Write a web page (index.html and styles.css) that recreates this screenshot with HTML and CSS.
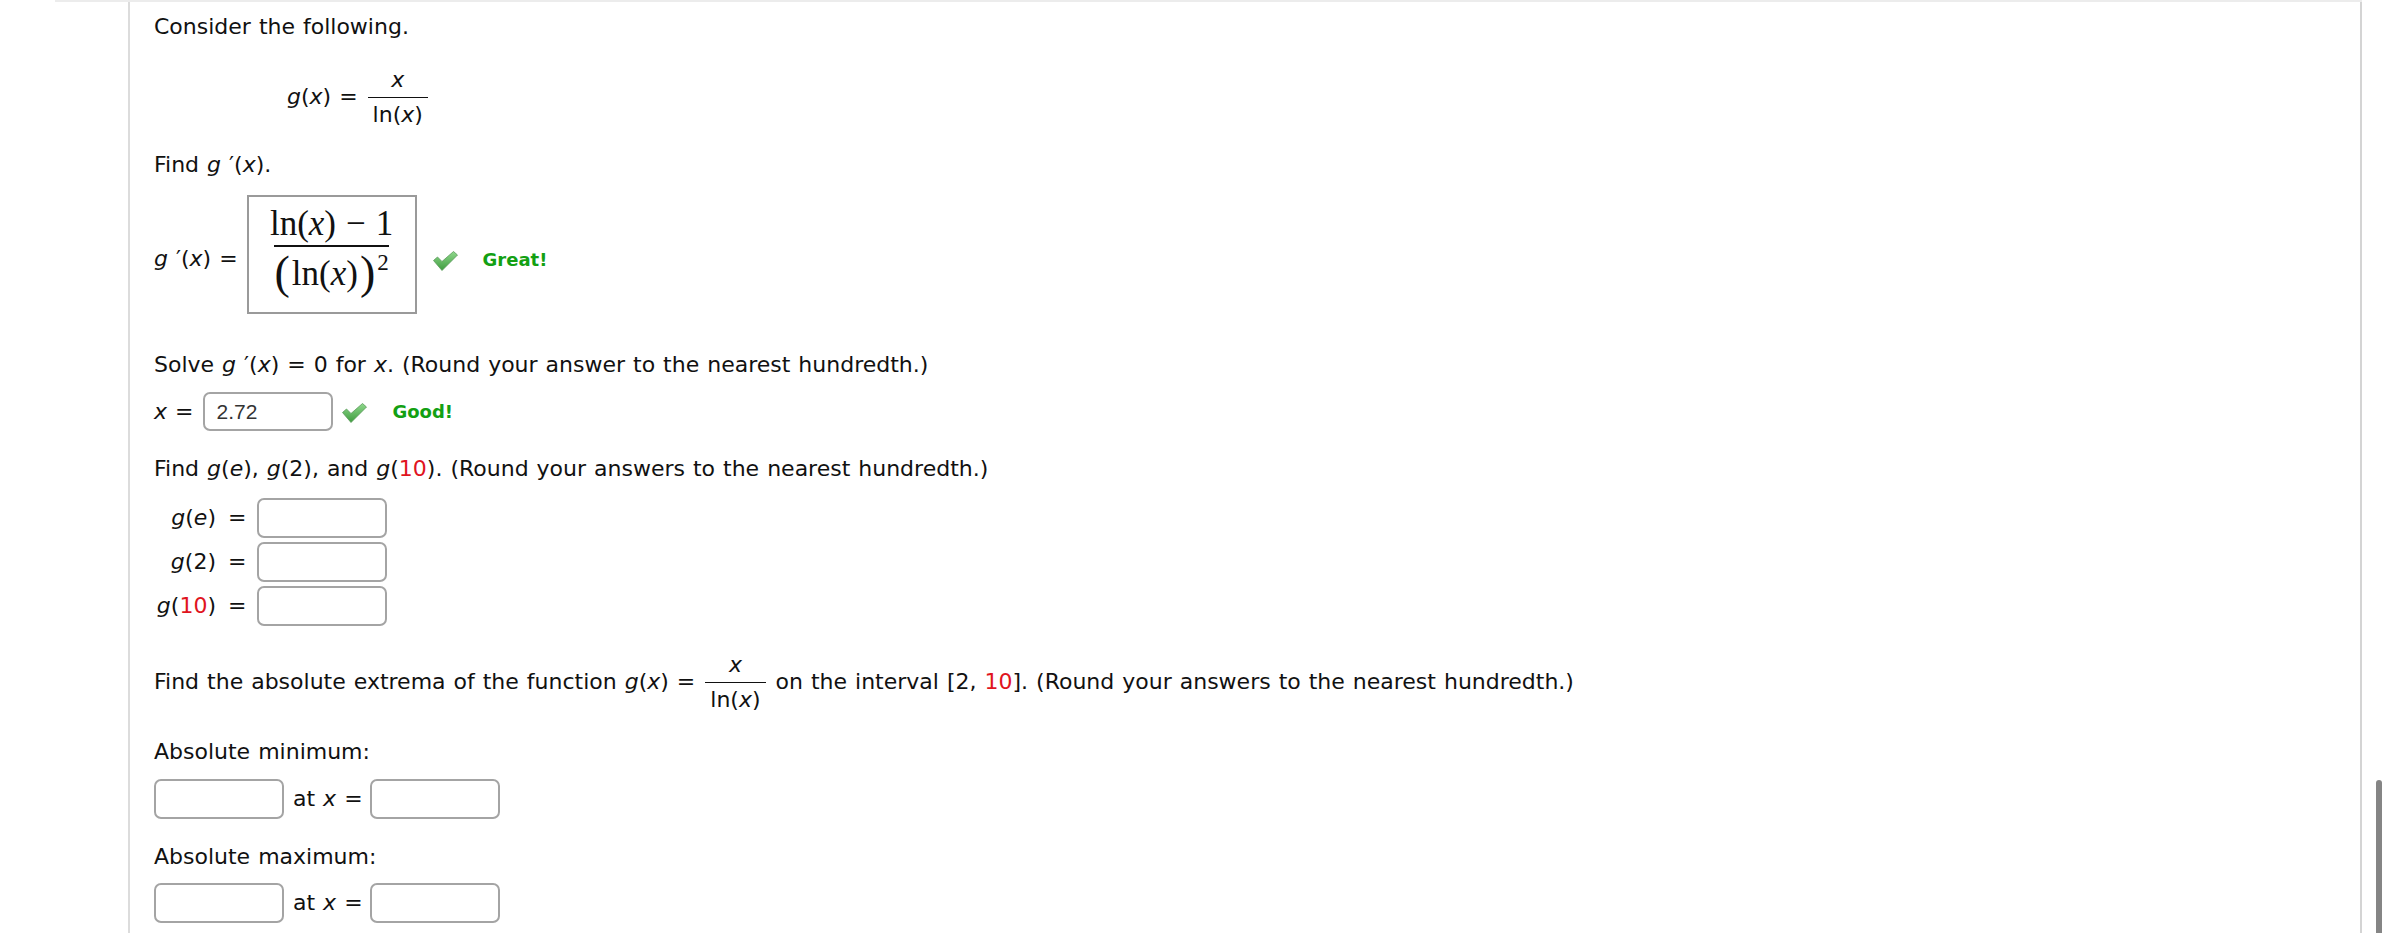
FILE: index.html
```html
<!DOCTYPE html>
<html lang="en">
<head>
<meta charset="utf-8">
<title>Consider the following</title>
<link rel="stylesheet" href="styles.css">
</head>
<body>
<div class="frame">
  <div class="panel">
    <p class="txt first">Consider the following.</p>
    <p class="txt display"><i>g</i>(<i>x</i>) = <span class="frac"><span class="num"><i>x</i></span><span class="den">ln(<i>x</i>)</span></span></p>
    <p class="txt find1">Find <i>g</i> ′(<i>x</i>).</p>

    <div class="row deriv">
      <span class="lbl lbl-d"><i>g</i> ′(<i>x</i>) =</span>
      <div class="mbox">
        <div class="mfrac">
          <div class="mnum">ln(<i>x</i>)<span class="op">−</span>1</div>
          <div class="mden"><span class="bigp bigp-l">(</span>ln(<i>x</i>)<span class="bigp bigp-r">)</span><sup class="msup">2</sup></div>
        </div>
      </div>
      <svg class="check check-d" viewBox="0 0 25 20" width="25" height="20" aria-hidden="true">
        <defs>
          <linearGradient id="cg1" x1="0" y1="0" x2="0" y2="1">
            <stop offset="0" stop-color="#8fd88c"/>
            <stop offset="1" stop-color="#3f9c3f"/>
          </linearGradient>
        </defs>
        <polygon points="0.5,9.5 4.5,6 9,10.5 20.5,0.5 24.5,4 9,19.5" fill="url(#cg1)" stroke="#5a9a5a" stroke-width="0.8" stroke-linejoin="round"/>
      </svg>
      <span class="ok ok-d">Great!</span>
    </div>

    <p class="txt solve">Solve <i>g</i> ′(<i>x</i>) = 0 for <i>x</i>. (Round your answer to the nearest hundredth.)</p>
    <div class="row xrow">
      <span class="lbl"><i>x</i> =</span>
      <input class="inp inp-x" type="text" value="2.72" readonly>
      <svg class="check check-x" viewBox="0 0 25 20" width="25" height="20" aria-hidden="true">
        <defs>
          <linearGradient id="cg2" x1="0" y1="0" x2="0" y2="1">
            <stop offset="0" stop-color="#8fd88c"/>
            <stop offset="1" stop-color="#3f9c3f"/>
          </linearGradient>
        </defs>
        <polygon points="0.5,9.5 4.5,6 9,10.5 20.5,0.5 24.5,4 9,19.5" fill="url(#cg2)" stroke="#5a9a5a" stroke-width="0.8" stroke-linejoin="round"/>
      </svg>
      <span class="ok ok-x">Good!</span>
    </div>

    <p class="txt findg">Find <i>g</i>(<i>e</i>), <i>g</i>(2), and <i>g</i>(<span class="red">10</span>). (Round your answers to the nearest hundredth.)</p>
    <div class="gtable">
      <span class="glbl"><i>g</i>(<i>e</i>)</span><span class="geq">=</span><input class="inp" type="text">
      <span class="glbl"><i>g</i>(2)</span><span class="geq">=</span><input class="inp" type="text">
      <span class="glbl"><i>g</i>(<span class="red">10</span>)</span><span class="geq">=</span><input class="inp" type="text">
    </div>

    <p class="txt extrema">Find the absolute extrema of the function <i>g</i>(<i>x</i>) = <span class="frac"><span class="num"><i>x</i></span><span class="den">ln(<i>x</i>)</span></span> on the interval [2, <span class="red">10</span>]. (Round your answers to the nearest hundredth.)</p>

    <p class="txt absmin">Absolute minimum:</p>
    <div class="row arow arow-min">
      <input class="inp" type="text"><span class="atx">at <i>x</i> =</span><input class="inp" type="text">
    </div>

    <p class="txt absmax">Absolute maximum:</p>
    <div class="row arow arow-max">
      <input class="inp" type="text"><span class="atx">at <i>x</i> =</span><input class="inp" type="text">
    </div>
  </div>
</div>
<div class="scroll-thumb"></div>
</body>
</html>
```
FILE: styles.css
```css
html, body {
  margin: 0;
  padding: 0;
  background: #ffffff;
}
body {
  position: relative;
  height: 933px;
  overflow: hidden;
  font-family: "DejaVu Sans", Verdana, sans-serif;
  font-size: 22px;
  word-spacing: 1px;
  color: #111;
}
.frame {
  margin-left: 55px;
  width: 2307px;
  height: 931px;
  border-top: 2px solid #ececec;
}
.panel {
  margin-left: 73px;
  height: 100%;
  box-sizing: border-box;
  border-left: 2px solid #dcdcdc;
  border-right: 2px solid #d4d4d4;
  padding: 10px 0 0 24px;
}
i {
  font-style: italic;
}
.txt {
  margin: 0;
  line-height: 30px;
  white-space: nowrap;
}
.red {
  color: #e0141e;
}

/* inline/display fraction */
.frac {
  display: inline-flex;
  flex-direction: column;
  align-items: center;
  vertical-align: middle;
  margin: 0 2px;
  word-spacing: 0;
}
.num {
  line-height: 22px;
  padding: 0 5px 6px;
}
.den {
  line-height: 22px;
  padding: 6px 5px 0;
  border-top: 1px solid #111;
}

.display {
  margin-top: 27px;
  padding-left: 133px;
}
.find1 {
  margin-top: 24px;
}

.row {
  display: flex;
  align-items: center;
}
.lbl {
  white-space: nowrap;
  line-height: 30px;
}

/* derivative answer */
.deriv {
  margin-top: 15px;
}
.lbl-d {
  margin-right: 9px;
  margin-top: 9px;
}
.mbox {
  box-sizing: border-box;
  width: 170px;
  height: 119px;
  border: 2px solid #9a9a9a;
  padding-top: 10px;
  display: flex;
  justify-content: center;
  font-family: "Liberation Serif", "Times New Roman", serif;
  font-size: 35px;
  word-spacing: 0;
  color: #111;
}
.mfrac {
  display: flex;
  flex-direction: column;
  align-items: center;
}
.mnum {
  line-height: 34px;
  padding: 0 3px 4px;
  white-space: nowrap;
}
.op {
  margin: 0 10px;
}
.mden {
  border-top: 2px solid #111;
  padding-top: 7px;
  line-height: 40px;
  white-space: nowrap;
}
.bigp {
  font-size: 46px;
  line-height: 0;
  vertical-align: -3px;
}
.bigp-l {
  margin-right: 2px;
}
.bigp-r {
  margin-left: 2px;
}
.msup {
  font-size: 23px;
  line-height: 0;
  vertical-align: 15px;
  margin-left: 2px;
}
.check {
  display: block;
  flex: none;
}
.check-d {
  margin-left: 16px;
  margin-top: 13px;
}
.ok {
  font-weight: bold;
  font-size: 18px;
  word-spacing: 0;
  color: #13a013;
  margin-left: 25px;
  white-space: nowrap;
}
.ok-d {
  margin-top: 9px;
}

/* inputs */
.inp {
  box-sizing: border-box;
  width: 130px;
  height: 40px;
  margin: 0;
  border: 2px solid #a4a4a4;
  border-radius: 7px;
  background: #fff;
  outline: none;
  padding: 0 0 0 11px;
  font-family: "Liberation Sans", Arial, sans-serif;
  font-size: 21px;
  color: #333;
}

.solve {
  margin-top: 36px;
}
.xrow {
  margin-top: 12px;
}
.inp-x {
  height: 39px;
  margin-left: 10px;
}
.check-x {
  margin-left: 9px;
  margin-top: 2px;
}

.findg {
  margin-top: 23px;
}
.gtable {
  margin-top: 14px;
  display: grid;
  grid-template-columns: 62px auto 130px;
  row-gap: 4px;
  align-items: center;
  justify-content: start;
}
.glbl {
  text-align: right;
  white-space: nowrap;
  line-height: 30px;
}
.geq {
  margin: 0 11px 0 12px;
  line-height: 30px;
}

.extrema {
  margin-top: 28px;
}
.absmin {
  margin-top: 26px;
}
.arow-min {
  margin-top: 12px;
}
.absmax {
  margin-top: 23px;
}
.arow-max {
  margin-top: 11px;
}
.atx {
  margin: 0 7px 0 9px;
  white-space: nowrap;
  line-height: 30px;
}

/* overlay scrollbar thumb of the scrolled page */
.scroll-thumb {
  position: absolute;
  left: 2376px;
  top: 780px;
  width: 6px;
  height: 160px;
  border-radius: 3px 3px 0 0;
  background: #858585;
}
```
